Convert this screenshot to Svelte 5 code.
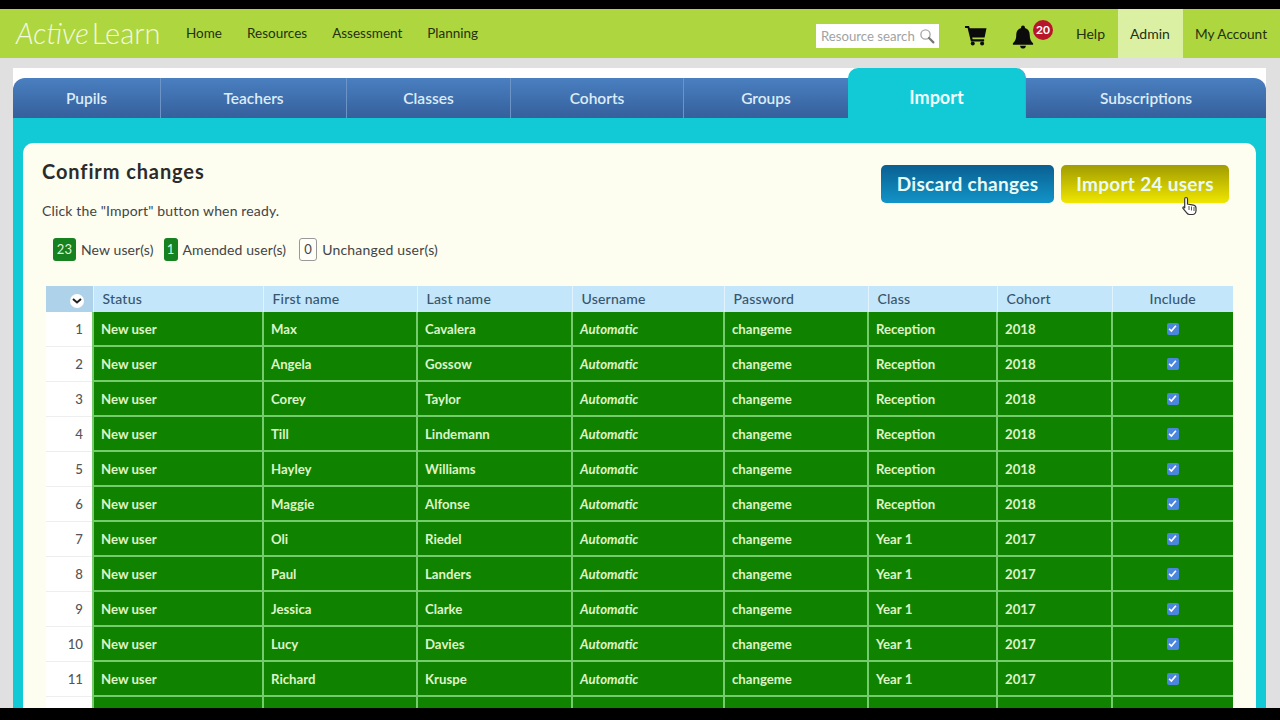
<script>
	const navLeft = ['Home', 'Resources', 'Assessment', 'Planning'];
	const tabs = [
		{ label: 'Pupils', width: 148 },
		{ label: 'Teachers', width: 186 },
		{ label: 'Classes', width: 164 },
		{ label: 'Cohorts', width: 173 },
		{ label: 'Groups', width: 164 },
		{ label: 'Import', width: 178, active: true },
		{ label: 'Subscriptions', width: 240 }
	];
	const columns = ['Status', 'First name', 'Last name', 'Username', 'Password', 'Class', 'Cohort', 'Include'];
	const people = [
		['Max', 'Cavalera', 'Reception', '2018'],
		['Angela', 'Gossow', 'Reception', '2018'],
		['Corey', 'Taylor', 'Reception', '2018'],
		['Till', 'Lindemann', 'Reception', '2018'],
		['Hayley', 'Williams', 'Reception', '2018'],
		['Maggie', 'Alfonse', 'Reception', '2018'],
		['Oli', 'Riedel', 'Year 1', '2017'],
		['Paul', 'Landers', 'Year 1', '2017'],
		['Jessica', 'Clarke', 'Year 1', '2017'],
		['Lucy', 'Davies', 'Year 1', '2017'],
		['Richard', 'Kruspe', 'Year 1', '2017'],
		['', '', '', '']
	];
</script>

<div class="screen">
	<header class="topbar">
		<div class="logo"><em>Active</em><span>Learn</span></div>
		<nav class="nav-left">
			{#each navLeft as item}
				<span>{item}</span>
			{/each}
		</nav>
		<div class="search">
			<span>Resource search</span>
			<svg width="16" height="16" viewBox="0 0 16 16" fill="none">
				<circle cx="6.5" cy="6.5" r="4.6" stroke="#a9a9a9" stroke-width="1.4" />
				<path d="M10 10l4.4 4.4" stroke="#777" stroke-width="2.2" stroke-linecap="round" />
			</svg>
		</div>
		<svg class="cart" width="24" height="21" viewBox="0 0 24 22">
			<path d="M0.5 1h4.2l0.8 2.400H23l-2 9.600H8l0.500 2h12v2.200H6.700L3.200 3.200H0.500z" fill="#0b0b0b" />
			<circle cx="8.600" cy="19.400" r="2.100" fill="#0b0b0b" />
			<circle cx="18.400" cy="19.400" r="2.100" fill="#0b0b0b" />
		</svg>
		<div class="bell">
			<svg width="22" height="24" viewBox="0 0 22 25">
				<path d="M11 0.500c1.200 0 2 .8 2 2v.7c3.400.9 5 3.600 5 7.300 0 4.500 1.300 6.500 3.500 8.500v1.500H.5V19c2.200-2 3.500-4 3.500-8.500 0-3.700 1.600-6.400 5-7.300v-.7c0-1.200.8-2 2-2z" fill="#0b0b0b" />
				<path d="M8 21.500h6c0 1.800-1.300 3-3 3s-3-1.200-3-3z" fill="#0b0b0b" />
			</svg>
			<span class="badge">20</span>
		</div>
		<nav class="nav-right">
			<span>Help</span>
			<span class="current">Admin</span>
			<span>My Account</span>
		</nav>
	</header>

	<div class="page">
		<div class="tabs">
			{#each tabs as tab}
				<div class="tab" class:active={tab.active} style="width: {tab.width}px">{tab.label}</div>
			{/each}
		</div>

		<div class="panel">
			<main class="card">
				<div class="card-head">
					<div>
						<h1>Confirm changes</h1>
						<p class="hint">Click the "Import" button when ready.</p>
					</div>
					<div class="actions">
						<button class="btn discard">Discard changes</button>
						<button class="btn import">Import 24 users</button>
						<svg class="pointer" width="18" height="20" viewBox="0 0 18 20">
							<path d="M5 1.500c.9 0 1.500.6 1.500 1.500v5l6 1.200c1.500.3 2.500 1.200 2.500 2.800v2.500c0 2-1.500 4-3.500 4H8.500c-1.300 0-2.100-.7-2.800-1.700L2 12.500c-.6-.9.500-2 1.500-1.300l.2 1.100V3c0-.9.500-1.500 1.300-1.500z" fill="#fff" stroke="#333" stroke-width="1.200" />
							<path d="M8 10v4M10.500 10.500v4M13 11v4" stroke="#555" stroke-width="1" />
						</svg>
					</div>
				</div>

				<div class="legend">
					<span class="count green wide">23</span><span class="legend-label">New user(s)</span>
					<span class="count green">1</span><span class="legend-label">Amended user(s)</span>
					<span class="count plain">0</span><span class="legend-label">Unchanged user(s)</span>
				</div>

				<table>
					<colgroup>
						<col style="width: 47px" />
						<col style="width: 170px" />
						<col style="width: 154px" />
						<col style="width: 155px" />
						<col style="width: 152px" />
						<col style="width: 144px" />
						<col style="width: 129px" />
						<col style="width: 115px" />
						<col style="width: 121px" />
					</colgroup>
					<thead>
						<tr>
							<th class="toggle"><span class="chevron">
								<svg width="10" height="6" viewBox="0 0 10 6"><path d="M1 1l4 3.500L9 1" fill="none" stroke="#222" stroke-width="2" /></svg>
							</span></th>
							{#each columns as col}
								<th class:center={col === 'Include'}>{col}</th>
							{/each}
						</tr>
					</thead>
					<tbody>
						{#each people as person, i}
							<tr>
								<td class="num">{person[0] ? i + 1 : ''}</td>
								<td>{person[0] ? 'New user' : ''}</td>
								<td>{person[0]}</td>
								<td>{person[1]}</td>
								<td><i>{person[0] ? 'Automatic' : ''}</i></td>
								<td>{person[0] ? 'changeme' : ''}</td>
								<td>{person[2]}</td>
								<td>{person[3]}</td>
								<td class="center">
									{#if person[0]}
										<span class="check">
											<svg width="9" height="9" viewBox="0 0 8 8"><path d="M1 4.200l2 2L7 1.500" fill="none" stroke="#fff" stroke-width="1.500" /></svg>
										</span>
									{/if}
								</td>
							</tr>
						{/each}
					</tbody>
				</table>
			</main>
		</div>
	</div>
</div>

<style>
	:global(body) {
		background: #000;
		font-family: Lato, "Open Sans", sans-serif;
	}

	.screen {
		margin-top: 9px;
		height: 699px;
		overflow: hidden;
		background: #e0e0e0;
		width: 1280px;
	}

	.topbar {
		height: 49px;
		background: #add63f;
		display: flex;
		align-items: center;
		color: #24310f;
		font-size: 14px;
	}

	.logo {
		width: 186px;
		padding-left: 16px;
		box-sizing: border-box;
		color: #f4f9df;
		font-size: 29px;
		font-weight: 300;
		white-space: nowrap;
		margin-top: -3px;
	}

	.logo em {
		font-size: 29px;
		margin-right: 3px;
		font-weight: 300;
	}

	.nav-left {
		display: flex;
		gap: 25px;
		margin-top: -2px;
		font-size: 13.5px;
	}

	.search {
		margin-left: auto;
		margin-top: 4px;
		width: 123px;
		height: 24px;
		box-sizing: border-box;
		background: #fff;
		color: #a2a2a2;
		font-size: 13.2px;
		display: flex;
		align-items: center;
		justify-content: space-between;
		padding: 0 4px 0 5px;
		white-space: nowrap;
	}

	.cart {
		margin-left: 25px;
		margin-top: 4px;
	}

	.bell {
		position: relative;
		margin-left: 24px;
		margin-right: 42px;
		height: 24px;
		margin-top: 6px;
	}

	.badge {
		position: absolute;
		left: 21px;
		top: -5px;
		width: 20px;
		height: 20px;
		border-radius: 50%;
		background: #b8152a;
		color: #fff;
		font-size: 12px;
		font-weight: 700;
		text-align: center;
		line-height: 20px;
	}

	.nav-right {
		display: flex;
		align-self: stretch;
	}

	.nav-right span {
		display: flex;
		align-items: center;
		padding: 0 12px;
		white-space: nowrap;
	}

	.nav-right span:first-child {
		padding: 0 13px 0 0;
	}

	.nav-right span:last-child {
		width: 97px;
		box-sizing: border-box;
		padding: 0 0 0 12px;
		font-size: 13.7px;
	}

	.nav-right .current {
		background: #dcf0a4;
		width: 65px;
		box-sizing: border-box;
	}

	.page {
		margin: 10px 14px 0 13px;
		background: #fff;
		padding-top: 10px;
	}

	.tabs {
		display: flex;
		height: 40px;
		border-radius: 12px 12px 0 0;
		background: linear-gradient(#4a7fc0, #35609c);
	}

	.tab {
		box-sizing: border-box;
		display: flex;
		align-items: center;
		justify-content: center;
		color: #dcecf8;
		font-size: 15.5px;
		font-weight: 600;
		border-right: 1px solid #6d94c6;
	}

	.tab:nth-child(5), .tab:last-child {
		border-right: 0;
	}

	.tab.active {
		height: 50px;
		margin-top: -10px;
		padding-top: 8px;
		background: #11cad5;
		color: #f2fcfb;
		font-size: 18px;
		font-weight: 700;
		border-radius: 10px 10px 0 0;
	}

	.panel {
		background: #11cad5;
		padding: 25px 10px 0;
	}

	.card {
		background: #fdfdf0;
		border-radius: 10px 10px 0 0;
		height: 600px;
		box-sizing: border-box;
		padding: 16px 23px 0 23px;
		color: #333;
	}

	.card-head {
		display: flex;
		justify-content: space-between;
		align-items: flex-start;
	}

	h1 {
		margin: 0 0 0 -4px;
		font-size: 20px;
		font-weight: 700;
		letter-spacing: 0.9px;
		color: #2b2b2b;
		line-height: 24px;
	}

	.hint {
		margin: 20px 0 0 -4px;
		font-size: 14px;
		letter-spacing: 0.15px;
		line-height: 16px;
		color: #444;
	}

	.actions {
		position: relative;
		display: flex;
		gap: 7px;
		margin: 6px 4px 0 0;
	}

	.btn {
		height: 38px;
		border: 0;
		border-radius: 5px;
		color: #e9fbf7;
		font-family: inherit;
		font-size: 19px;
		font-weight: 700;
		letter-spacing: 0.3px;
		padding: 0 0 2px;
	}

	.discard {
		width: 173px;
		background: linear-gradient(#0a5f92, #1294c8);
	}

	.import {
		width: 168px;
		background: linear-gradient(#a19c02, #f0e600);
	}

	.pointer {
		position: absolute;
		left: 300px;
		top: 31px;
	}

	.legend {
		display: flex;
		align-items: center;
		margin-top: 19px;
		margin-left: 7px;
		font-size: 14px;
		letter-spacing: 0.1px;
		color: #444;
		height: 22px;
	}

	.count {
		height: 23px;
		width: 14px;
		box-sizing: border-box;
		border-radius: 3px;
		display: flex;
		align-items: center;
		justify-content: center;
		font-size: 13px;
	}

	.count.wide {
		width: 23px;
	}

	.count.green {
		background: #15811f;
		color: #dff5dc;
	}

	.count.plain {
		width: 18px;
		margin-left: 3px;
		border: 1px solid #999;
		color: #444;
		background: #fffff8;
	}

	.legend-label {
		margin: 0 10px 0 5px;
	}

	.count.plain + .legend-label {
		letter-spacing: 0.2px;
	}

	table {
		border-collapse: collapse;
		table-layout: fixed;
		width: 1187px;
		margin-top: 26px;
		font-size: 13.2px;
	}

	th {
		height: 26px;
		padding: 0 0 2px 9px;
		box-sizing: border-box;
		background: #c3e6fb;
		color: #38556b;
		font-size: 14px;
		font-weight: 500;
		letter-spacing: 0.2px;
		text-align: left;
		border-left: 1px solid #e3f3fd;
	}

	th.toggle {
		background: #aed2ea;
		padding: 0;
		border-left: 0;
		text-align: right;
	}

	th.center {
		text-align: center;
		padding: 0 0 2px;
	}

	.chevron {
		display: inline-flex;
		align-items: center;
		justify-content: center;
		width: 14px;
		height: 14px;
		border-radius: 50%;
		background: #fff;
		margin-right: 9px;
		vertical-align: middle;
	}

	td {
		height: 35px;
		box-sizing: border-box;
		padding: 0 0 0 7px;
		background: #0f8300;
		color: #dff3c8;
		font-weight: 700;
		border: 2px solid #74cc6c;
	}

	tbody tr:first-child td {
		border-top: 0;
		height: 34px;
	}

	td:last-child {
		border-right: 0;
	}

	td.num {
		background: #fff;
		color: #555;
		text-align: right;
		padding: 0 9px 0 0;
		font-weight: 500;
		border: 0;
		border-bottom: 1px solid #eee;
	}

	td.center {
		padding: 0 1px 0 0;
	}

	.check {
		display: flex;
		align-items: center;
		justify-content: center;
		width: 12px;
		height: 12px;
		margin: 0 auto;
		border-radius: 2px;
		background: #4a86de;
	}
</style>
